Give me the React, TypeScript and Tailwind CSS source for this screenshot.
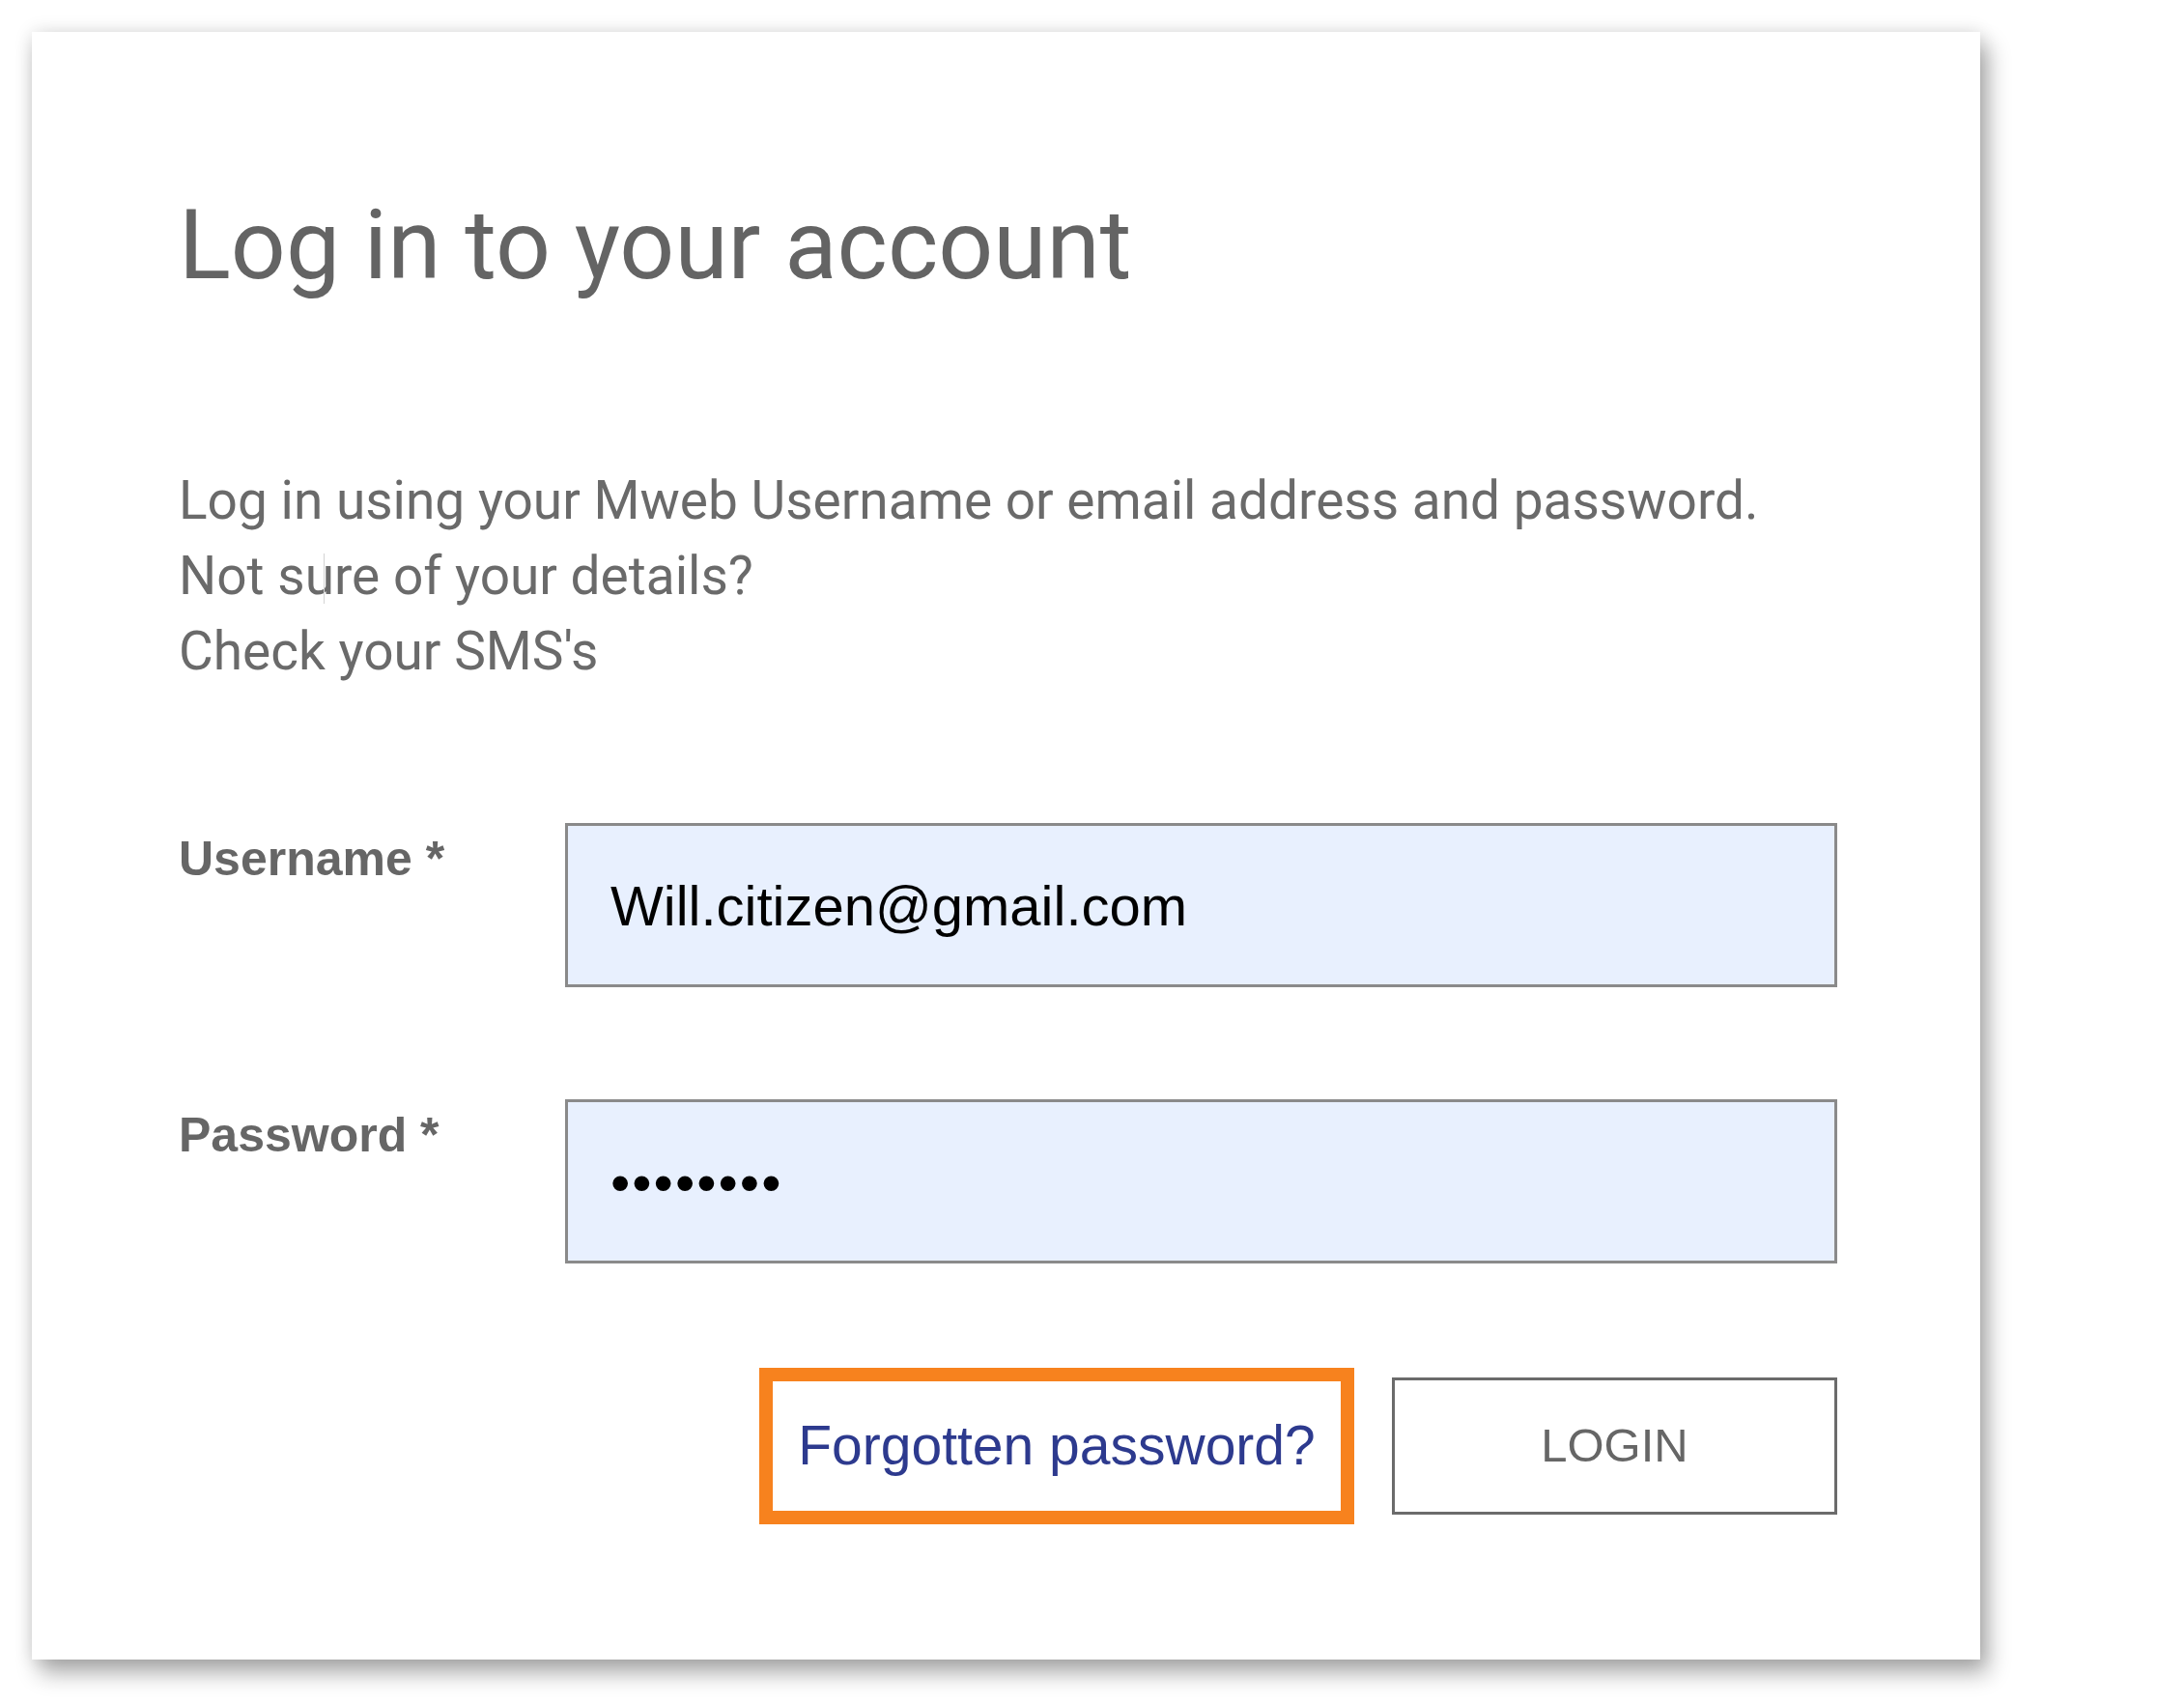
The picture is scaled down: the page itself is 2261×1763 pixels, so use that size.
import React from "react";

const sans = "font-['Liberation_Sans',Arial,sans-serif]";
const roboto = "font-['Roboto','Liberation_Sans',sans-serif]";

function Field({
  label,
  value,
  type,
}: {
  label: string;
  value: string;
  type: "text" | "password";
}) {
  return (
    <div className="flex items-start">
      <label
        className={`${sans} w-[400px] shrink-0 mt-[7px] text-[50px] leading-[60px] font-bold text-[#666666]`}
      >
        {label} *
      </label>
      <input
        type={type}
        value={value}
        readOnly
        className={`${sans} h-[170px] w-[1317px] border-[3px] border-[#8a8a8a] bg-[#e8f0fe] pl-[44px] text-[58px] text-black outline-none ${
          type === "password" ? "tracking-[2px]" : ""
        }`}
      />
    </div>
  );
}

export default function App() {
  return (
    <div className="w-[2261px] h-[1763px] bg-white pt-[33px] pl-[33px]">
      <div className="relative w-[2017px] h-[1685px] bg-white pt-[173px] pl-[152px] pr-[148px] shadow-[0_0_18px_rgba(0,0,0,0.12),8px_14px_22px_rgba(0,0,0,0.32)]">
        <h1
          className={`${roboto} text-[100px] leading-[96px] font-normal text-[#646464]`}
        >
          Log in to your account
        </h1>

        <div
          className={`${roboto} mt-[177px] text-[55px] leading-[78px] text-[#6a6a6a]`}
        >
          <p>Log in using your Mweb Username or email address and password.</p>
          <p>Not sure of your details?</p>
          <p>Check your SMS's</p>
        </div>

        {/* stray text cursor */}
        <div className="absolute left-[302px] top-[540px] w-[1px] h-[52px] bg-[#d4d4d4]" />

        <div className="mt-[139px] flex flex-col gap-[116px]">
          <Field label="Username" value="Will.citizen@gmail.com" type="text" />
          <Field label="Password" value="12345678" type="password" />
        </div>

        <div className="mt-[108px] flex items-center justify-end gap-[39px]">
          <a
            href="#"
            className={`${sans} flex h-[162px] w-[616px] items-center justify-center border-[14px] border-[#f7821e] text-[57px] text-[#2d3a8e]`}
          >
            Forgotten password?
          </a>
          <button
            className={`${sans} h-[142px] w-[461px] border-[3px] border-[#6b6b6b] bg-white text-[49px] text-[#666666]`}
          >
            LOGIN
          </button>
        </div>
      </div>
    </div>
  );
}
